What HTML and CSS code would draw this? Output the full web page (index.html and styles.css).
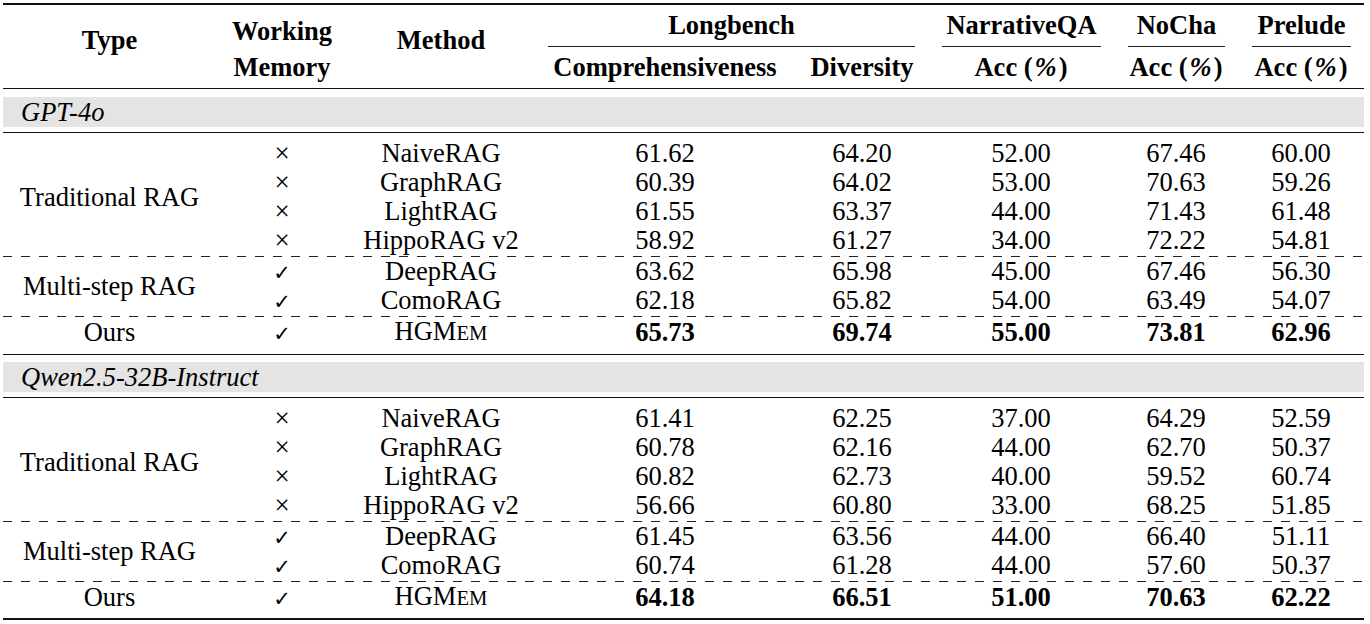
FILE: index.html
```html
<!DOCTYPE html>
<html>
<head>
<meta charset="utf-8">
<title>Results table</title>
<link rel="stylesheet" href="styles.css">
</head>
<body>
<table class="results">
  <colgroup>
    <col class="c1"><col class="c2"><col class="c3"><col class="c4"><col class="c5"><col class="c6"><col class="c7"><col class="c8">
  </colgroup>
  <thead>
    <tr class="h1">
      <th rowspan="2" class="span-head">Type</th>
      <th rowspan="2" class="wm-head"><div>Working</div><div>Memory</div></th>
      <th rowspan="2" class="span-head">Method</th>
      <th colspan="2"><div class="grp">Longbench</div></th>
      <th><div class="grp">NarrativeQA</div></th>
      <th><div class="grp">NoCha</div></th>
      <th><div class="grp">Prelude</div></th>
    </tr>
    <tr class="h2">
      <th>Comprehensiveness</th>
      <th>Diversity</th>
      <th>Acc (<span class="pct">%</span>)</th>
      <th>Acc (<span class="pct">%</span>)</th>
      <th>Acc (<span class="pct">%</span>)</th>
    </tr>
  </thead>
  <tbody>
    <tr class="model"><td colspan="8"><div class="band">GPT-4o</div></td></tr>
    <tr class="first"><td rowspan="4">Traditional RAG</td><td><span class="cross">×</span></td><td>NaiveRAG</td><td>61.62</td><td>64.20</td><td>52.00</td><td>67.46</td><td>60.00</td></tr>
    <tr><td><span class="cross">×</span></td><td>GraphRAG</td><td>60.39</td><td>64.02</td><td>53.00</td><td>70.63</td><td>59.26</td></tr>
    <tr><td><span class="cross">×</span></td><td>LightRAG</td><td>61.55</td><td>63.37</td><td>44.00</td><td>71.43</td><td>61.48</td></tr>
    <tr><td><span class="cross">×</span></td><td>HippoRAG v2</td><td>58.92</td><td>61.27</td><td>34.00</td><td>72.22</td><td>54.81</td></tr>
    <tr class="dash"><td colspan="8"></td></tr>
    <tr><td rowspan="2">Multi-step RAG</td><td><span class="tick">✓</span></td><td>DeepRAG</td><td>63.62</td><td>65.98</td><td>45.00</td><td>67.46</td><td>56.30</td></tr>
    <tr><td><span class="tick">✓</span></td><td>ComoRAG</td><td>62.18</td><td>65.82</td><td>54.00</td><td>63.49</td><td>54.07</td></tr>
    <tr class="dash"><td colspan="8"></td></tr>
    <tr class="last best"><td>Ours</td><td><span class="tick">✓</span></td><td>HGM<span class="sc">EM</span></td><td>65.73</td><td>69.74</td><td>55.00</td><td>73.81</td><td>62.96</td></tr>

    <tr class="model second"><td colspan="8"><div class="band">Qwen2.5-32B-Instruct</div></td></tr>
    <tr class="first"><td rowspan="4">Traditional RAG</td><td><span class="cross">×</span></td><td>NaiveRAG</td><td>61.41</td><td>62.25</td><td>37.00</td><td>64.29</td><td>52.59</td></tr>
    <tr><td><span class="cross">×</span></td><td>GraphRAG</td><td>60.78</td><td>62.16</td><td>44.00</td><td>62.70</td><td>50.37</td></tr>
    <tr><td><span class="cross">×</span></td><td>LightRAG</td><td>60.82</td><td>62.73</td><td>40.00</td><td>59.52</td><td>60.74</td></tr>
    <tr><td><span class="cross">×</span></td><td>HippoRAG v2</td><td>56.66</td><td>60.80</td><td>33.00</td><td>68.25</td><td>51.85</td></tr>
    <tr class="dash"><td colspan="8"></td></tr>
    <tr><td rowspan="2">Multi-step RAG</td><td><span class="tick">✓</span></td><td>DeepRAG</td><td>61.45</td><td>63.56</td><td>44.00</td><td>66.40</td><td>51.11</td></tr>
    <tr><td><span class="tick">✓</span></td><td>ComoRAG</td><td>60.74</td><td>61.28</td><td>44.00</td><td>57.60</td><td>50.37</td></tr>
    <tr class="dash"><td colspan="8"></td></tr>
    <tr class="last end best"><td>Ours</td><td><span class="tick">✓</span></td><td>HGM<span class="sc">EM</span></td><td>64.18</td><td>66.51</td><td>51.00</td><td>70.63</td><td>62.22</td></tr>
  </tbody>
</table>
</body>
</html>
```

FILE: styles.css
```css
html, body {
  margin: 0;
  padding: 0;
  background: #ffffff;
}

body {
  font-family: "Liberation Serif", serif;
  font-size: 26.5px;
  color: #000;
}

.results {
  margin: 3px 0 0 3px;
  width: 1361px;
  table-layout: fixed;
  border-collapse: separate;
  border-spacing: 0;
  border-top: 2px solid #111;
  border-bottom: 2px solid #111;
  font-size: 26.5px;
}

.c1 { width: 213px; }
.c2 { width: 132px; }
.c3 { width: 186px; }
.c4 { width: 262px; }
.c5 { width: 132px; }
.c6 { width: 186px; }
.c7 { width: 124px; }
.c8 { width: 126px; }

th, td {
  padding: 0;
  text-align: center;
  white-space: nowrap;
  font-family: "Liberation Serif", serif;
}

th {
  font-weight: bold;
}

/* header */
.h1 th {
  vertical-align: top;
}

.grp {
  margin: 0 13px 0 14px;
  line-height: 40px;
  padding-bottom: 1px;
  border-bottom: 1px solid #222;
}

.span-head {
  vertical-align: top;
  padding-top: 20px;
  line-height: 30px;
  border-bottom: 1px solid #111;
}

.wm-head {
  vertical-align: top;
  padding-top: 8px;
  line-height: 36px;
  border-bottom: 1px solid #111;
}

.h2 th {
  line-height: 40px;
  padding-bottom: 1px;
  border-bottom: 1px solid #111;
}

.pct {
  font-style: italic;
  padding: 0 2px;
}

/* model band */
.model td {
  padding: 8px 0 5px;
  border-bottom: 1px solid #111;
}

.model.second td {
  padding-top: 7px;
}

.band {
  height: 30px;
  line-height: 30px;
  background: #e4e4e4;
  text-align: left;
  padding-left: 18px;
  font-style: italic;
}

/* data rows */
tbody td {
  line-height: 29px;
  height: 29px;
}

tbody .first td {
  padding-top: 6px;
}

tbody .last td {
  padding-bottom: 6px;
  border-bottom: 1px solid #111;
}

tbody .last.end td {
  padding-bottom: 5px;
  border-bottom: none;
}

.best td:nth-child(n+4) {
  font-weight: bold;
}

.dash td {
  height: 2px;
  line-height: 0;
  font-size: 0;
  background: repeating-linear-gradient(to right, #222 0 9px, transparent 9px 18px) left bottom / 100% 1px no-repeat;
}

.cross {
  font-size: 27px;
  line-height: 0;
}

.tick {
  font-family: "DejaVu Sans", sans-serif;
  font-size: 21px;
  line-height: 0;
}

.sc {
  font-size: 0.78em;
}
```
